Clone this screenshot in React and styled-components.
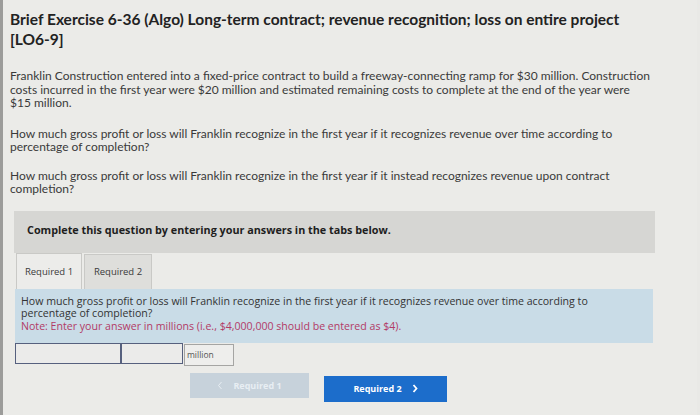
import styled, { createGlobalStyle } from "styled-components";

const GlobalStyle = createGlobalStyle`
  html, body {
    margin: 0;
    padding: 0;
    background: #e9e9e6;
  }
`;

// whole page with the grey strip on the left
const Page = styled.div`
  width: 697px;
  height: 415px;
  box-sizing: border-box;
  border-left: 3px solid #9c9c9a;
  background: #ebebe8;
  padding: 9px 0 0 7px;
  font-family: Lato, "Liberation Sans", sans-serif;
  color: #2a2a2a;
  overflow: hidden;
`;

const Title = styled.h1`
  margin: 0;
  width: 625px;
  font-size: 15.5px;
  line-height: 20px;
  font-weight: 700;
  color: #222;
`;

const Paragraph = styled.p`
  margin: ${(props) => props.$top || 0}px 0 0;
  width: 642px;
  font-size: 12px;
  line-height: 13.5px;
  color: #3a3a3a;
`;

// grey instructions band
const Instructions = styled.div`
  margin: 15px 0 0 4px;
  width: 641px;
  height: 42px;
  box-sizing: border-box;
  background: #d6d6d3;
  padding: 11px 0 0 13px;
  font-family: "Open Sans", "DejaVu Sans", sans-serif;
  font-size: 10.8px;
  line-height: 15px;
  font-weight: 700;
  color: #1e1e1e;
`;

const TabRow = styled.div`
  display: flex;
  gap: 2px;
  margin: 0 0 0 6px;
  align-items: flex-end;
`;

const Tab = styled.div`
  width: ${(props) => props.$w}px;
  height: ${(props) => (props.$active ? 36 : 35)}px;
  box-sizing: border-box;
  display: flex;
  align-items: center;
  justify-content: center;
  border: 1px solid #c9c9c6;
  border-bottom: none;
  background: ${(props) => (props.$active ? "#ececea" : "#dededb")};
  font-family: "Open Sans", "DejaVu Sans", sans-serif;
  font-size: 9.5px;
  color: #3a3a3a;
`;

// light-blue question panel
const Panel = styled.div`
  margin-left: 5px;
  width: 638px;
  height: 54px;
  box-sizing: border-box;
  background: #c9dce7;
  padding: 6px 0 0 6px;
  font-family: "Open Sans", "DejaVu Sans", sans-serif;
  font-size: 10.6px;
  line-height: 12.5px;
  color: #333;
`;

const Question = styled.div`
  max-width: 605px;
`;

const Note = styled.div`
  color: #b23a66;
`;

const InputRow = styled.div`
  display: flex;
  align-items: flex-start;
  margin: 0 0 0 5px;
`;

const AnswerBox = styled.div`
  width: ${(props) => props.$w}px;
  height: 21px;
  box-sizing: border-box;
  border: 1.5px solid #56607e;
  background: #ebebea;
`;

const UnitBox = styled.div`
  width: 50px;
  height: 22px;
  margin: 1px 0 0 1px;
  box-sizing: border-box;
  border: 1px solid #a5a5a3;
  background: #eeeeec;
  padding-left: 2px;
  display: flex;
  align-items: center;
  font-family: "Open Sans", "DejaVu Sans", sans-serif;
  font-size: 8.5px;
  color: #555;
`;

const ButtonRow = styled.div`
  display: flex;
  align-items: flex-start;
  gap: 15px;
  margin: 7px 0 0 180px;
`;

const NavButton = styled.div`
  width: ${(props) => (props.$primary ? 123 : 119)}px;
  height: ${(props) => (props.$primary ? 26 : 25)}px;
  margin-top: ${(props) => (props.$primary ? 3 : 0)}px;
  display: flex;
  align-items: center;
  justify-content: center;
  gap: 10px;
  background: ${(props) => (props.$primary ? "#1c6dcb" : "#c7d2db")};
  color: ${(props) => (props.$primary ? "#ffffff" : "#e8eef3")};
  font-family: "Open Sans", "DejaVu Sans", sans-serif;
  font-size: 9px;
  font-weight: 700;
`;

const Chevron = ({ dir }) => (
  <svg width="6" height="9" viewBox="0 0 6 9">
    <path
      d={dir === "left" ? "M4.5 1 L1.5 4.5 L4.5 8" : "M1.5 1 L4.5 4.5 L1.5 8"}
      fill="none"
      stroke="currentColor"
      strokeWidth={dir === "left" ? 1 : 1.8}
    />
  </svg>
);

export default function App() {
  return (
    <>
      <GlobalStyle />
      <Page>
        <Title>
          Brief Exercise 6-36 (Algo) Long-term contract; revenue recognition;
          loss on entire project [LO6-9]
        </Title>
        <Paragraph $top={20}>
          Franklin Construction entered into a fixed-price contract to build a
          freeway-connecting ramp for $30 million. Construction costs incurred
          in the first year were $20 million and estimated remaining costs to
          complete at the end of the year were $15 million.
        </Paragraph>
        <Paragraph $top={17}>
          How much gross profit or loss will Franklin recognize in the first
          year if it recognizes revenue over time according to percentage of
          completion?
        </Paragraph>
        <Paragraph $top={15}>
          How much gross profit or loss will Franklin recognize in the first
          year if it instead recognizes revenue upon contract completion?
        </Paragraph>
        <Instructions>
          Complete this question by entering your answers in the tabs below.
        </Instructions>
        <TabRow>
          <Tab $active $w={66}>
            Required 1
          </Tab>
          <Tab $w={68}>Required 2</Tab>
        </TabRow>
        <Panel>
          <Question>
            How much gross profit or loss will Franklin recognize in the first
            year if it recognizes revenue over time according to percentage of
            completion?
          </Question>
          <Note>
            Note: Enter your answer in millions (i.e., $4,000,000 should be
            entered as $4).
          </Note>
        </Panel>
        <InputRow>
          <AnswerBox $w={106} />
          <AnswerBox $w={62} />
          <UnitBox>million</UnitBox>
        </InputRow>
        <ButtonRow>
          <NavButton>
            <Chevron dir="left" />
            Required 1
          </NavButton>
          <NavButton $primary>
            Required 2
            <Chevron dir="right" />
          </NavButton>
        </ButtonRow>
      </Page>
    </>
  );
}
